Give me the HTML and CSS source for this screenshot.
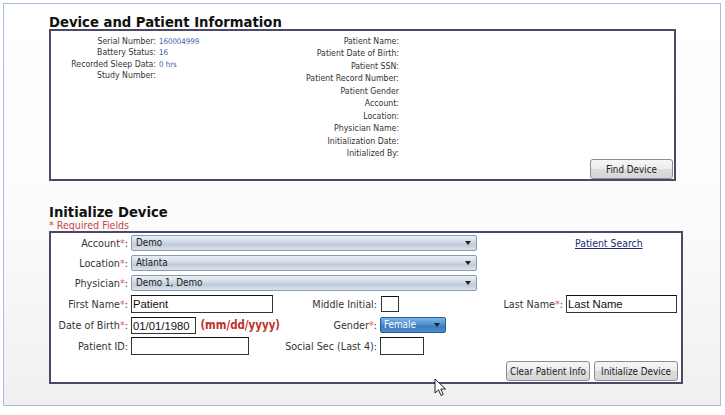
FILE: index.html
```html
<!DOCTYPE html>
<html>
<head>
<meta charset="utf-8">
<link rel="stylesheet" href="styles.css">
</head>
<body>
<div class="frame">
  <h2 class="title">Device and Patient Information</h2>
  <div class="box box-info">
    <div class="info-cols">
      <div class="info-left">
        <span class="lbl">Serial Number:</span><span class="val">160004999</span>
        <span class="lbl">Battery Status:</span><span class="val">16</span>
        <span class="lbl">Recorded Sleep Data:</span><span class="val">0 hrs</span>
        <span class="lbl">Study Number:</span><span class="val"></span>
      </div>
      <div class="info-right">
        <span class="lbl">Patient Name:</span><span class="val"></span>
        <span class="lbl">Patient Date of Birth:</span><span class="val"></span>
        <span class="lbl">Patient SSN:</span><span class="val"></span>
        <span class="lbl">Patient Record Number:</span><span class="val"></span>
        <span class="lbl">Patient Gender</span><span class="val"></span>
        <span class="lbl">Account:</span><span class="val"></span>
        <span class="lbl">Location:</span><span class="val"></span>
        <span class="lbl">Physician Name:</span><span class="val"></span>
        <span class="lbl">Initialization Date:</span><span class="val"></span>
        <span class="lbl">Initialized By:</span><span class="val"></span>
      </div>
    </div>
    <div class="btn-row"><button class="btn btn-find">Find Device</button></div>
  </div>

  <h2 class="title title2">Initialize Device</h2>
  <div class="req">* Required Fields</div>
  <div class="box box-init">
    <div class="sel-row">
      <span class="flbl">Account<i>*</i>:</span>
      <div class="sel">Demo<span class="arrow"></span></div>
      <a class="link" href="#">Patient Search</a>
    </div>
    <div class="sel-row">
      <span class="flbl">Location<i>*</i>:</span>
      <div class="sel">Atlanta<span class="arrow"></span></div>
    </div>
    <div class="sel-row">
      <span class="flbl">Physician<i>*</i>:</span>
      <div class="sel">Demo 1, Demo<span class="arrow"></span></div>
    </div>
    <div class="grid">
      <span class="flbl">First Name<i>*</i>:</span>
      <div class="cell"><div class="inp w-first">Patient</div></div>
      <span class="flbl">Middle Initial:</span>
      <div class="cell"><div class="inp w-mid"></div></div>
      <span class="flbl">Last Name<i>*</i>:</span>
      <div class="cell"><div class="inp w-last">Last Name</div></div>

      <span class="flbl">Date of Birth<i>*</i>:</span>
      <div class="cell"><div class="inp w-dob">01/01/1980</div><span class="fmt">(mm/dd/yyyy)</span></div>
      <span class="flbl">Gender<i>*</i>:</span>
      <div class="cell"><div class="gsel">Female<span class="arrow"></span></div></div>
      <span></span><span></span>

      <span class="flbl">Patient ID:</span>
      <div class="cell"><div class="inp w-pid"></div></div>
      <span class="flbl">Social Sec (Last 4):</span>
      <div class="cell"><div class="inp w-ssn"></div></div>
      <span></span><span></span>
    </div>
    <div class="btn-row btn-row2">
      <button class="btn btn-clear">Clear Patient Info</button>
      <button class="btn btn-init">Initialize Device</button>
    </div>
  </div>
  <svg class="cursor" width="14" height="20" viewBox="0 0 14 20"><path d="M1 1 L1 15 L4.5 11.8 L7 17.5 L9.2 16.5 L6.8 11 L11.5 11 Z" fill="#fff" stroke="#222" stroke-width="1" stroke-linejoin="round"/></svg>
</div>
</body>
</html>
```

FILE: styles.css
```css
html, body {
  margin: 0;
  padding: 0;
  background: #ffffff;
}
body {
  font-family: "DejaVu Sans Condensed", "DejaVu Sans", sans-serif;
  color: #333;
}
.frame {
  position: relative;
  margin: 3px 4px 0 3px;
  height: 403px;
  box-sizing: border-box;
  border: 1px solid #a9bcd9;
  background: linear-gradient(#ffffff 0%, #fcfcfc 50%, #f0f0f0 100%);
  padding: 9px 0 0 45px;
}
.title {
  margin: 0;
  font-size: 14.7px;
  line-height: 15px;
  height: 16px;
  font-weight: bold;
  color: #111;
  padding-top: 1px;
  box-sizing: border-box;
}
.box {
  box-sizing: border-box;
  border: 2px solid #4a4a68;
  background: #fff;
  display: flex;
  flex-direction: column;
}
.box-info {
  width: 627px;
  height: 152px;
  padding: 4px 1px 0 0;
}
.info-cols {
  display: flex;
}
.info-left {
  width: 200px;
  display: grid;
  grid-template-columns: 105px auto;
  column-gap: 3px;
  grid-auto-rows: 11.4px;
  align-content: start;
  font-size: 8.7px;
  line-height: 11px;
  padding-top: 1px;
}
.info-right {
  display: grid;
  grid-template-columns: 148px auto;
  column-gap: 3px;
  grid-auto-rows: 12.45px;
  font-size: 8.7px;
  line-height: 12px;
}
.lbl {
  text-align: right;
  color: #333;
  white-space: nowrap;
}
.val {
  color: #3b5ea6;
  font-size: 7.8px;
}
.btn-row {
  margin-top: auto;
  display: flex;
  justify-content: flex-end;
  gap: 4px;
}
.btn {
  font-family: "DejaVu Sans Condensed", "DejaVu Sans", sans-serif;
  font-size: 9.8px;
  color: #222;
  height: 20px;
  padding: 0;
  border: 1px solid #8c8c8c;
  border-radius: 3px;
  background: linear-gradient(#f6f6f6 0%, #ececec 50%, #dcdcdc 51%, #d6d6d6 100%);
}
.btn-find { width: 83px; }
.btn-clear { width: 84px; }
.btn-init { width: 84px; }
.title2 {
  margin-top: 22px;
  height: 17px;
  line-height: 16px;
  padding-top: 1px;
}
.req {
  font-size: 10.6px;
  line-height: 11px;
  height: 11px;
  color: #c8453e;
}
.box-init {
  width: 634px;
  height: 153px;
  padding: 2px 3px 1px 0;
}
.flbl {
  text-align: right;
  white-space: nowrap;
  font-size: 10.7px;
  color: #333;
  padding-right: 3px;
}
.flbl i {
  font-style: normal;
  color: #e0605a;
}
.sel-row {
  display: flex;
  align-items: center;
  height: 16px;
  margin-bottom: 4px;
}
.sel-row .flbl {
  width: 77px;
}
.sel {
  position: relative;
  box-sizing: border-box;
  width: 346px;
  height: 16px;
  border: 1px solid #8c9cb0;
  border-radius: 2px;
  background: linear-gradient(#e9eef4 0%, #d3dde8 40%, #bfcbd8 60%, #dbe2ea 100%);
  font-size: 9.8px;
  line-height: 14px;
  padding-left: 4px;
  color: #222;
}
.arrow {
  position: absolute;
  right: 5px;
  top: 5px;
  width: 0;
  height: 0;
  border-left: 3px solid transparent;
  border-right: 3px solid transparent;
  border-top: 4px solid #222;
}
.link {
  margin-left: 98px;
  font-size: 10.4px;
  color: #1c2a6e;
  text-decoration: underline;
}
.grid {
  display: grid;
  grid-template-columns: 80px 149px 100px 86px 100px 111px;
  grid-template-rows: 18px 18px 18px;
  row-gap: 3px;
  align-items: center;
}
.cell {
  display: flex;
  align-items: center;
}
.inp {
  box-sizing: border-box;
  height: 18px;
  border: 1px solid #333;
  border-top-color: #111;
  background: #fff;
  font-family: "Liberation Sans", Arial, sans-serif;
  font-size: 11.3px;
  line-height: 16px;
  padding-left: 1px;
  color: #111;
}
.w-first { width: 142px; }
.w-mid { width: 18px; height: 16px; margin-left: 1px; }
.w-last { width: 111px; }
.w-dob { width: 68px; height: 17px; }
.w-pid { width: 118px; }
.w-ssn { width: 44px; }
.fmt {
  margin-left: 4px;
  font-size: 11.4px;
  font-weight: bold;
  color: #c0302c;
}
.gsel {
  position: relative;
  box-sizing: border-box;
  width: 66px;
  height: 16px;
  border: 1px solid #2b5c92;
  border-radius: 2px;
  background: linear-gradient(#7eb4e6 0%, #4e90d2 45%, #3a7cc0 60%, #4d8ccc 100%);
  color: #fff;
  font-size: 9.8px;
  line-height: 14px;
  padding-left: 3px;
}
.btn-row2 {
  padding-right: 0;
}
.cursor {
  position: absolute;
  left: 430px;
  top: 374px;
}
```
